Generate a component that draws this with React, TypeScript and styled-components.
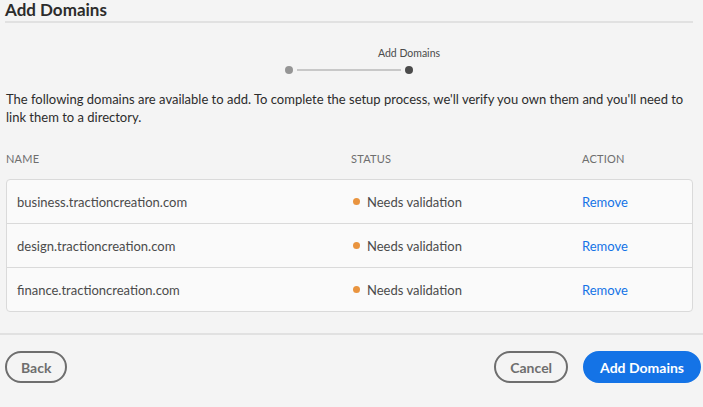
import React from 'react'
import styled, { createGlobalStyle } from 'styled-components'

const GlobalStyle = createGlobalStyle`
  html, body {
    margin: 0;
    padding: 0;
    background: #f4f4f4;
  }
  body {
    font-family: 'Lato', 'Noto Sans', sans-serif;
    color: #4b4b4b;
  }
`

const domains = [
  'business.tractioncreation.com',
  'design.tractioncreation.com',
  'finance.tractioncreation.com',
]

const App: React.FC = () => {
  return (
    <Page>
      <GlobalStyle />
      <Content>
        <Title>Add Domains</Title>
        <Stepper>
          <Step>
            <StepLabel />
            <Dot done />
          </Step>
          <Line />
          <Step>
            <StepLabel>Add Domains</StepLabel>
            <Dot />
          </Step>
        </Stepper>
        <Intro>
          The following domains are available to add. To complete the setup process, we'll verify you own them and you'll need to
          link them to a directory.
        </Intro>
        <HeaderRow>
          <HeadCell>Name</HeadCell>
          <HeadCell>Status</HeadCell>
          <HeadCell>Action</HeadCell>
        </HeaderRow>
        <Table>
          {domains.map((d) => (
            <Row key={d}>
              <Cell>{d}</Cell>
              <Cell>
                <StatusDot />
                Needs validation
              </Cell>
              <Cell>
                <LinkButton>Remove</LinkButton>
              </Cell>
            </Row>
          ))}
        </Table>
      </Content>
      <Footer>
        <Button>Back</Button>
        <Actions>
          <Button>Cancel</Button>
          <Button primary>Add Domains</Button>
        </Actions>
      </Footer>
    </Page>
  )
}

const Page = styled.div`
  width: 703px;
  height: 407px;
  overflow: hidden;
`

const Content = styled.div`
  padding: 0 10px 0 6px;
`

const Title = styled.h2`
  margin: 0 0 0 -1px;
  font-size: 17px;
  font-weight: 700;
  line-height: 20px;
  height: 21px;
  color: #2c2c2c;
  border-bottom: 2px solid #e1e1e1;
`

const Stepper = styled.div`
  display: flex;
  align-items: flex-end;
  margin: 23px 0 0 279px;
`

const Step = styled.div`
  display: flex;
  flex-direction: column;
  align-items: center;
`

const StepLabel = styled.div`
  margin: 0 -40px 6px;
  height: 14px;
  font-size: 10.5px;
  line-height: 14px;
  white-space: nowrap;
  color: #4b4b4b;
`

const Dot = styled.span<{ done?: boolean }>`
  width: 8px;
  height: 8px;
  border-radius: 50%;
  background: ${(p) => (p.done ? '#959595' : '#4b4b4b')};
`

const Line = styled.span`
  width: 104px;
  height: 2px;
  margin: 0 4px 3px;
  background: #c8c8c8;
`

const Intro = styled.p`
  margin: 16px 0 0;
  font-size: 13px;
  line-height: 18px;
  color: #2c2c2c;
`

const HeaderRow = styled.div`
  display: grid;
  grid-template-columns: 345px 231px 1fr;
  margin-top: 11px;
  height: 42px;
  align-items: center;
`

const HeadCell = styled.div`
  font-size: 11px;
  text-transform: uppercase;
  color: #6e6e6e;
  letter-spacing: 0.02em;
`

const Table = styled.div`
  border: 1px solid #dadada;
  border-radius: 4px;
  background: #fafafa;
`

const Row = styled.div`
  display: grid;
  grid-template-columns: 334px 231px 1fr;
  align-items: center;
  height: 43px;
  padding-left: 10px;
  & + & {
    border-top: 1px solid #dadada;
  }
`

const Cell = styled.div`
  display: flex;
  align-items: center;
  font-size: 13px;
  color: #4b4b4b;
`

const StatusDot = styled.span`
  width: 7px;
  height: 7px;
  border-radius: 50%;
  background: #e9943f;
  margin: 0 7px 0 2px;
`

const LinkButton = styled.span`
  color: #1473e6;
  cursor: pointer;
`

const Footer = styled.div`
  display: flex;
  justify-content: space-between;
  align-items: center;
  margin-top: 21px;
  border-top: 2px solid #e1e1e1;
  padding: 16px 2px 0 5px;
`

const Actions = styled.div`
  display: flex;
  gap: 15px;
`

const Button = styled.button<{ primary?: boolean }>`
  height: 32px;
  padding: 0 ${(p) => (p.primary ? '15px' : '14px')};
  border-radius: 16px;
  font-family: 'Lato', 'Noto Sans', sans-serif;
  font-size: 14px;
  font-weight: 700;
  border: 2px solid ${(p) => (p.primary ? '#1473e6' : '#6e6e6e')};
  background: ${(p) => (p.primary ? '#1473e6' : 'transparent')};
  color: ${(p) => (p.primary ? '#ffffff' : '#6e6e6e')};
  cursor: pointer;
`

export default App
